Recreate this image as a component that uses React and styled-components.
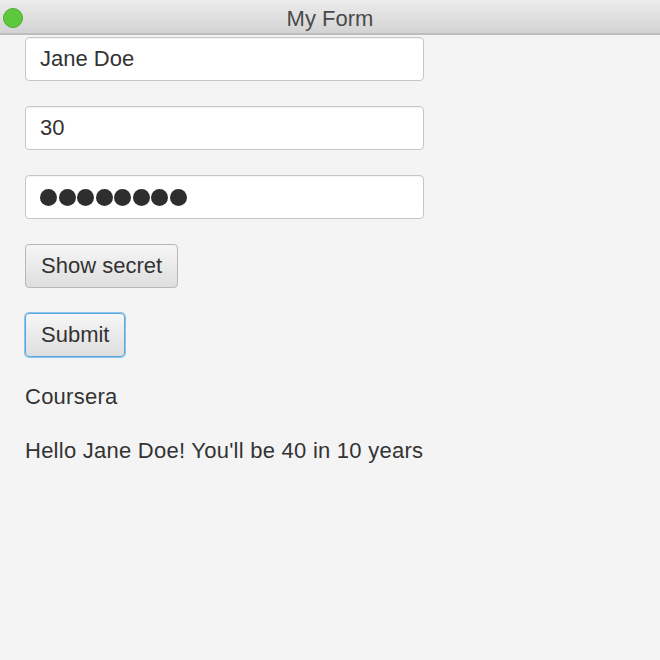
import React from "react";
import styled, { createGlobalStyle } from "styled-components";

const GlobalStyle = createGlobalStyle`
  html, body {
    margin: 0;
    padding: 0;
    background: #f4f4f4;
  }
  body {
    font-family: "Liberation Sans", Arial, sans-serif;
    color: #333333;
  }
`;

const Window = styled.div`
  width: 660px;
  height: 660px;
  background: #f4f4f4;
  overflow: hidden;
`;

const TitleBar = styled.div`
  position: relative;
  height: 33px;
  background: linear-gradient(#ececec, #d3d3d3);
  border-bottom: 2px solid #bdbdbd;
  display: flex;
  align-items: center;
  justify-content: center;
`;

const TrafficLight = styled.span`
  position: absolute;
  left: 3px;
  top: 8px;
  width: 18px;
  height: 18px;
  border-radius: 50%;
  background: #5cc93c;
  border: 1px solid #4caa30;
`;

const Title = styled.div`
  font-size: 22px;
  color: #4a4a4a;
  padding-top: 4px;
`;

const Form = styled.div`
  display: flex;
  flex-direction: column;
  align-items: flex-start;
  gap: 25px;
  padding: 2px 25px 0;
`;

const Field = styled.div`
  box-sizing: border-box;
  width: 399px;
  height: 44px;
  background: #ffffff;
  border: 1px solid #c6c6c6;
  border-radius: 4px;
  box-shadow: inset 0 1px 1px rgba(0, 0, 0, 0.05);
  display: flex;
  align-items: center;
  gap: 1.5px;
  padding: 0 14px;
  font-size: 22px;
  color: #333333;
`;

const Dot = styled.span`
  width: 17px;
  height: 17px;
  border-radius: 50%;
  background: #2e2e2e;
`;

const Button = styled.button`
  box-sizing: border-box;
  height: 44px;
  padding: 0 15px;
  font-family: "Liberation Sans", Arial, sans-serif;
  font-size: 22px;
  color: #333333;
  background: linear-gradient(#f6f6f6, #dedede);
  border: 1px solid ${(p) => (p.$focused ? "#5aa6de" : "#b8b8b8")};
  box-shadow: ${(p) => (p.$focused ? "0 0 0 1px #8ec3ea" : "none")};
  border-radius: 4px;
`;

const Label = styled.div`
  font-size: 22px;
  line-height: 29px;
  letter-spacing: 0.25px;
  color: #333333;
`;

export default function App() {
  return (
    <Window>
      <GlobalStyle />
      <TitleBar>
        <TrafficLight />
        <Title>My Form</Title>
      </TitleBar>
      <Form>
        <Field>Jane Doe</Field>
        <Field>30</Field>
        <Field>
          {Array.from({ length: 8 }).map((_, i) => (
            <Dot key={i} />
          ))}
        </Field>
        <Button>Show secret</Button>
        <Button $focused>Submit</Button>
        <Label>Coursera</Label>
        <Label>Hello Jane Doe! You'll be 40 in 10 years</Label>
      </Form>
    </Window>
  );
}
